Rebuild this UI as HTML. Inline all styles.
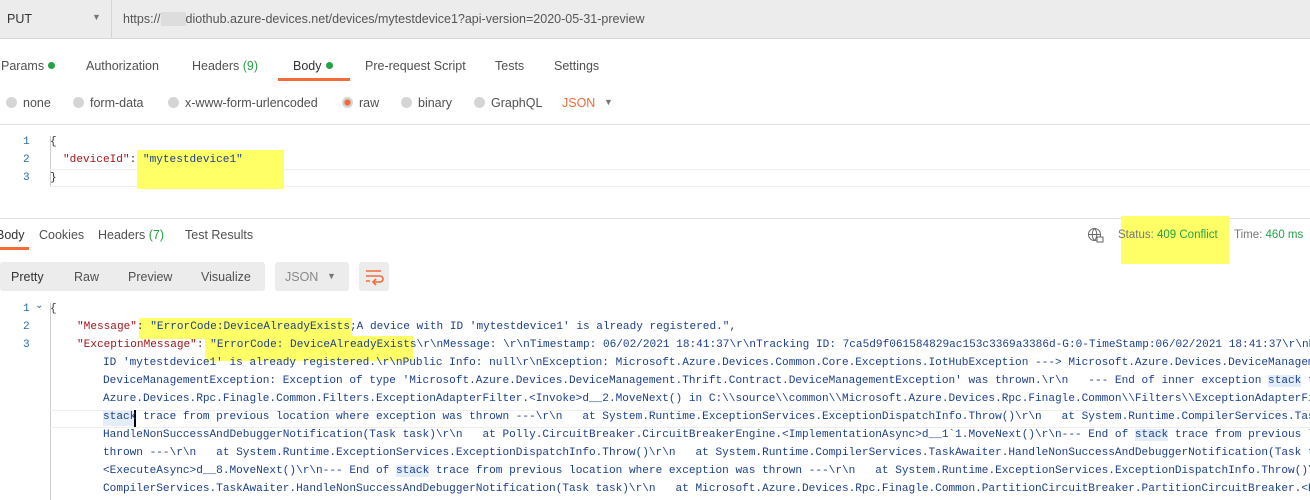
<!DOCTYPE html>
<html><head><style>
body{margin:0;width:1310px;height:500px;overflow:hidden;background:#fff;font-family:"Liberation Sans",sans-serif;font-size:12.5px;color:#505050;position:relative}
.a{position:absolute;white-space:pre}
.m{font-family:"Liberation Mono",monospace;font-size:11.1px;color:#1c3f8c;overflow:hidden}
.w{width:1207px}
.k{color:#a3151a}
.hl{background:#ffff66}
.st{background:#e3eefa}
.g{color:#26a146}
.dot{display:inline-block;width:7px;height:7px;border-radius:50%;background:#26a146;margin-left:4px;vertical-align:1px}
.r{display:inline-block;width:11px;height:11px;border-radius:50%;background:#d5d5d5;vertical-align:-1px;margin-right:6px}
.ln{color:#2c6fa8;font-family:"Liberation Mono",monospace;font-size:11.1px}
</style></head><body>
<div class="a" style="left:0;top:0;width:1310px;height:38px;background:#ececec;border-bottom:1px solid #d8d8d8"></div>
<div class="a" style="left:111px;top:0;width:1px;height:38px;background:#d5d5d5"></div>
<div class="a" style="left:7px;top:12px;color:#333">PUT</div>
<div class="a" style="left:92px;top:12px;font-size:9px;color:#777">▼</div>
<div class="a" style="left:123px;top:12px;color:#555">https://<span style="background:#ddd;color:#ddd">xxxx</span>diothub.azure-devices.net/devices/mytestdevice1?api-version=2020-05-31-preview</div>

<div class="a" style="left:1px;top:59px">Params<span class="dot"></span></div>
<div class="a" style="left:86px;top:59px">Authorization</div>
<div class="a" style="left:192px;top:59px">Headers <span class="g">(9)</span></div>
<div class="a" style="left:293px;top:59px;color:#333">Body<span class="dot"></span></div>
<div class="a" style="left:278px;top:78px;width:72px;height:3px;background:#f26b3a"></div>
<div class="a" style="left:365px;top:59px">Pre-request Script</div>
<div class="a" style="left:495px;top:59px">Tests</div>
<div class="a" style="left:554px;top:59px">Settings</div>

<div class="a" style="left:6px;top:96px"><span class="r"></span>none</div>
<div class="a" style="left:73px;top:96px"><span class="r"></span>form-data</div>
<div class="a" style="left:168px;top:96px"><span class="r"></span>x-www-form-urlencoded</div>
<div class="a" style="left:342px;top:96px"><span class="r" style="background:radial-gradient(#f26b3a 35%,#d5d5d5 45%)"></span>raw</div>
<div class="a" style="left:401px;top:96px"><span class="r"></span>binary</div>
<div class="a" style="left:474px;top:96px"><span class="r"></span>GraphQL</div>
<div class="a" style="left:562px;top:96px;color:#f26b3a">JSON</div>
<div class="a" style="left:604px;top:97px;font-size:9px;color:#777">▼</div>

<div class="a" style="left:0;top:124px;width:1310px;height:1px;background:#e0e0e0"></div>
<div class="a ln" style="left:23px;top:136px">1</div>
<div class="a ln" style="left:23px;top:154px">2</div>
<div class="a ln" style="left:23px;top:172px">3</div>
<div class="a" style="left:50px;top:136px;width:1px;height:50px;background:#ccc"></div>
<div class="a" style="left:50px;top:169px;width:1260px;height:16px;border-top:1px solid #eee;border-bottom:1px solid #eee"></div>
<div class="a hl" style="left:137px;top:150px;width:147px;height:39px"></div>
<div class="a m" style="left:50px;top:136px;color:#333">{</div>
<div class="a m" style="left:63px;top:154px"><span class="k">"deviceId"</span><span style="color:#333">: </span>"mytestdevice1"</div>
<div class="a m" style="left:50px;top:172px;color:#333">}</div>

<div class="a" style="left:0;top:218px;width:1310px;height:1px;background:#e0e0e0"></div>
<div class="a" style="left:-4px;top:228px;color:#333">Body</div>
<div class="a" style="left:0;top:247px;width:29px;height:3px;background:#f26b3a"></div>
<div class="a" style="left:39px;top:228px">Cookies</div>
<div class="a" style="left:98px;top:228px">Headers <span class="g">(7)</span></div>
<div class="a" style="left:185px;top:228px">Test Results</div>
<svg class="a" style="left:1087px;top:227px" width="18" height="17"><circle cx="7.5" cy="7.5" r="6" stroke="#666" fill="none"/><path d="M1.5 7.5h12M7.5 1.5c-3 3-3 9 0 12M7.5 1.5c3 3 3 9 0 12" stroke="#666" fill="none"/><rect x="10" y="10" width="6" height="5" fill="#fff" stroke="#666"/></svg>
<div class="a hl" style="left:1121px;top:216px;width:108px;height:48px"></div>
<div class="a" style="left:1118px;top:229px;font-size:11.5px;color:#777">Status: <span class="g">409 Conflict</span></div>
<div class="a" style="left:1234px;top:229px;font-size:11.5px;color:#777">Time: <span class="g">460 ms</span></div>

<div class="a" style="left:0;top:262px;width:265px;height:29px;background:#ececec;border-radius:3px"></div>
<div class="a" style="left:11px;top:270px;color:#333">Pretty</div>
<div class="a" style="left:74px;top:270px">Raw</div>
<div class="a" style="left:128px;top:270px">Preview</div>
<div class="a" style="left:201px;top:270px">Visualize</div>
<div class="a" style="left:275px;top:262px;width:74px;height:29px;background:#ececec;border-radius:3px"></div>
<div class="a" style="left:285px;top:270px;color:#888">JSON</div>
<div class="a" style="left:327px;top:271px;font-size:9px;color:#777">▼</div>
<div class="a" style="left:359px;top:262px;width:30px;height:29px;background:#ececec;border-radius:3px"></div>
<svg class="a" style="left:363px;top:266px" width="22" height="20"><path d="M3 5h15M3 10h14a3 3 0 0 1 0 6h-6M3 15h4M13 13l-3 3 3 3" stroke="#f26b3a" stroke-width="1.6" fill="none"/></svg>

<div class="a" style="left:50px;top:303px;width:1px;height:197px;background:#ccc"></div>
<div class="a ln" style="left:23px;top:303px">1</div>
<div class="a" style="left:35px;top:300px;font-size:10px;color:#2c6fa8">⌄</div>
<div class="a ln" style="left:23px;top:321px">2</div>
<div class="a ln" style="left:23px;top:339px">3</div>
<div class="a" style="left:50px;top:410px;width:1260px;height:16px;border-top:1px solid #eee;border-bottom:1px solid #eee"></div>
<div class="a hl" style="left:139px;top:318px;width:213px;height:21px"></div>
<div class="a hl" style="left:205px;top:336px;width:208px;height:25px"></div>
<div class="a st" style="left:103px;top:411px;width:32px;height:15px"></div>
<div class="a" style="left:134px;top:410px;width:2px;height:17px;background:#000"></div>
<div class="a m" style="left:50px;top:303px;color:#333">{</div>
<div class="a m w" style="left:77px;top:321px;width:1233px"><span class="k">"Message"</span><span style="color:#333">: </span>"ErrorCode:DeviceAlreadyExists;A device with ID 'mytestdevice1' is already registered.",</div>
<div class="a m w" style="left:77px;top:339px;width:1233px"><span class="k">"ExceptionMessage"</span><span style="color:#333">: </span>"ErrorCode: DeviceAlreadyExists\r\nMessage: \r\nTimestamp: 06/02/2021 18:41:37\r\nTracking ID: 7ca5d9f061584829ac153c3369a3386d-G:0-TimeStamp:06/02/2021 18:41:37\r\nPublic</div>
<div class="a m w" style="left:103px;top:357px">ID 'mytestdevice1' is already registered.\r\nPublic Info: null\r\nException: Microsoft.Azure.Devices.Common.Core.Exceptions.IotHubException ---&gt; Microsoft.Azure.Devices.DeviceManagement</div>
<div class="a m w" style="left:103px;top:375px">DeviceManagementException: Exception of type 'Microsoft.Azure.Devices.DeviceManagement.Thrift.Contract.DeviceManagementException' was thrown.\r\n   --- End of inner exception <span class="st">stack</span> trace</div>
<div class="a m w" style="left:103px;top:393px">Azure.Devices.Rpc.Finagle.Common.Filters.ExceptionAdapterFilter.&lt;Invoke&gt;d__2.MoveNext() in C:\\source\\common\\Microsoft.Azure.Devices.Rpc.Finagle.Common\\Filters\\ExceptionAdapterFilter</div>
<div class="a m w" style="left:103px;top:411px">stack trace from previous location where exception was thrown ---\r\n   at System.Runtime.ExceptionServices.ExceptionDispatchInfo.Throw()\r\n   at System.Runtime.CompilerServices.TaskAwaiter</div>
<div class="a m w" style="left:103px;top:429px">HandleNonSuccessAndDebuggerNotification(Task task)\r\n   at Polly.CircuitBreaker.CircuitBreakerEngine.&lt;ImplementationAsync&gt;d__1`1.MoveNext()\r\n--- End of <span class="st">stack</span> trace from previous location</div>
<div class="a m w" style="left:103px;top:447px">thrown ---\r\n   at System.Runtime.ExceptionServices.ExceptionDispatchInfo.Throw()\r\n   at System.Runtime.CompilerServices.TaskAwaiter.HandleNonSuccessAndDebuggerNotification(Task task)</div>
<div class="a m w" style="left:103px;top:465px">&lt;ExecuteAsync&gt;d__8.MoveNext()\r\n--- End of <span class="st">stack</span> trace from previous location where exception was thrown ---\r\n   at System.Runtime.ExceptionServices.ExceptionDispatchInfo.Throw()\r\n</div>
<div class="a m w" style="left:103px;top:483px">CompilerServices.TaskAwaiter.HandleNonSuccessAndDebuggerNotification(Task task)\r\n   at Microsoft.Azure.Devices.Rpc.Finagle.Common.PartitionCircuitBreaker.PartitionCircuitBreaker.&lt;Ex</div>
</body></html>
